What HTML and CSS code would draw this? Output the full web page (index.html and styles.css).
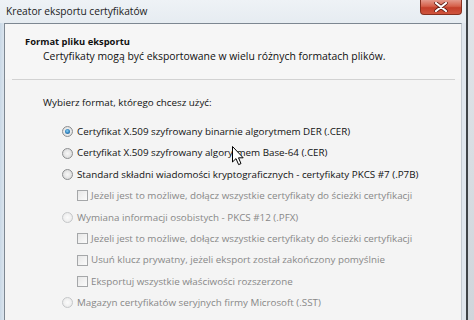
FILE: index.html
```html
<!DOCTYPE html>
<html lang="pl">
<head>
<meta charset="utf-8">
<title>Kreator eksportu certyfikatów</title>
<link rel="stylesheet" href="styles.css">
</head>
<body>
<div class="screen">
  <div class="window">
    <div class="titlebar">
      <span class="title">Kreator eksportu certyfikatów</span>
      <div class="close">
        <svg width="14" height="10" viewBox="0 0 14 10"><path d="M2 1 L12 9 M12 1 L2 9" stroke="#5a1a12" stroke-width="3.6" stroke-linecap="round"/><path d="M2 1 L12 9 M12 1 L2 9" stroke="#ffffff" stroke-width="2.2" stroke-linecap="round"/></svg>
      </div>
    </div>
    <div class="panel">
      <div class="header">
        <div class="h-title">Format pliku eksportu</div>
        <div class="h-sub">Certyfikaty mogą być eksportowane w wielu różnych formatach plików.</div>
      </div>
      <div class="sep"></div>
      <div class="content">
        <div class="prompt">Wybierz format, którego chcesz użyć:</div>
        <div class="opt"><span class="radio checked"></span>Certyfikat X.509 szyfrowany binarnie algorytmem DER (.CER)</div>
        <div class="opt"><span class="radio"></span>Certyfikat X.509 szyfrowany algorytmem Base-64 (.CER)</div>
        <div class="opt"><span class="radio"></span>Standard składni wiadomości kryptograficznych - certyfikaty PKCS #7 (.P7B)</div>
        <div class="opt sub disabled"><span class="check"></span>Jeżeli jest to możliwe, dołącz wszystkie certyfikaty do ścieżki certyfikacji</div>
        <div class="opt disabled"><span class="radio"></span>Wymiana informacji osobistych - PKCS #12 (.PFX)</div>
        <div class="opt sub disabled"><span class="check"></span>Jeżeli jest to możliwe, dołącz wszystkie certyfikaty do ścieżki certyfikacji</div>
        <div class="opt sub disabled"><span class="check"></span>Usuń klucz prywatny, jeżeli eksport został zakończony pomyślnie</div>
        <div class="opt sub disabled"><span class="check"></span>Eksportuj wszystkie właściwości rozszerzone</div>
        <div class="opt disabled"><span class="radio"></span>Magazyn certyfikatów seryjnych firmy Microsoft (.SST)</div>
      </div>
    </div>
  </div>
  <div class="edge"></div>
  <div class="beyond"></div>
</div>
<svg class="cursor" width="13" height="20" viewBox="0 0 13 20"><path d="M0.5 0.5 L0.5 16 L4 12.6 L6.6 18.6 L9 17.6 L6.5 11.8 L11.2 11.8 Z" fill="#ffffff" stroke="#000000" stroke-width="1" stroke-linejoin="round"/></svg>
</body>
</html>
```

FILE: styles.css
```css
html, body {
  margin: 0;
  padding: 0;
}
body {
  width: 474px;
  height: 320px;
  overflow: hidden;
  font-family: "Open Sans", "Noto Sans", sans-serif;
  position: relative;
}
.screen {
  display: flex;
  height: 320px;
}
.window {
  width: 466px;
  display: flex;
  flex-direction: column;
  background: linear-gradient(90deg, #c9d8e6 0px, #e4ebf2 6px, #e9eef3 60%, #dfe6ed 100%);
}
.edge {
  width: 2px;
  background: #3f4448;
}
.beyond {
  flex: 1;
  background: linear-gradient(#e1e5e9, #cfd5db);
}
.titlebar {
  height: 23px;
  display: flex;
  align-items: flex-start;
  background: linear-gradient(#eef2f6, #e6ecf1);
}
.title {
  padding-left: 6px;
  margin-top: 3px;
  font-size: 10.2px;
  line-height: 16px;
  color: #1b1b1b;
  flex: 1;
}
.close {
  width: 42px;
  height: 15px;
  margin-right: 4px;
  box-sizing: border-box;
  border: 1px solid #86301f;
  border-top: none;
  border-radius: 0 0 4px 4px;
  background: linear-gradient(#e49a8c 0%, #d5604a 45%, #c43f2a 55%, #cf553d 100%);
  display: flex;
  align-items: center;
  justify-content: center;
}
.close svg {
  display: block;
}
.panel {
  flex: 1;
  margin: 0 4px;
  border-top: 1px solid #7d8791;
  border-left: 1px solid #7d8791;
  border-right: 1px solid #c3cad1;
  background: #f4f4f4;
  display: flex;
  flex-direction: column;
}
.header {
  height: 55px;
  box-sizing: border-box;
  padding: 11px 0 0 20px;
  background: #f6f6f6;
}
.h-title {
  font-weight: bold;
  font-size: 9.4px;
  line-height: 14px;
  color: #111111;
}
.h-sub {
  padding-left: 18px;
  font-size: 10.4px;
  line-height: 14px;
  color: #111111;
}
.sep {
  height: 1px;
  margin: 0 6px 0 7px;
  background: #d2d2d2;
}
.content {
  padding: 12px 0 0 38px;
  font-size: 9.8px;
  color: #111111;
}
.prompt {
  line-height: 21.4px;
  margin-bottom: 7.6px;
}
.opt {
  height: 21.4px;
  line-height: 21.4px;
  display: flex;
  align-items: center;
  padding-left: 19px;
  white-space: nowrap;
}
.opt.sub {
  padding-left: 34px;
}
.opt.disabled {
  color: #888888;
}
.radio {
  width: 11px;
  height: 11px;
  box-sizing: border-box;
  border-radius: 50%;
  border: 1px solid #8c8e90;
  background: radial-gradient(circle at 50% 50%, #f7f7f7 0%, #e8e8e8 45%, #cfd0d1 100%);
  margin-right: 4px;
  flex: none;
  position: relative;
}
.radio.checked {
  background: radial-gradient(circle at 50% 50%, #ffffff 0%, #e6e6e6 60%, #c9caca 100%);
}
.radio.checked::after {
  content: "";
  position: absolute;
  left: 2px;
  top: 2px;
  width: 5px;
  height: 5px;
  border-radius: 50%;
  background: radial-gradient(circle at 45% 40%, #8fd3f5 0%, #3a8cc6 45%, #1b4e7d 100%);
}
.disabled .radio {
  border-color: #c5c7c9;
  background: radial-gradient(circle at 50% 50%, #fbfbfb 0%, #f1f1f1 50%, #e2e2e2 100%);
}
.check {
  width: 11px;
  height: 11px;
  box-sizing: border-box;
  border: 1px solid #a5a7a9;
  background: linear-gradient(135deg, #e7e7e7, #fbfbfb);
  margin-right: 3px;
  flex: none;
}
.cursor {
  position: absolute;
  left: 232px;
  top: 146px;
}
```
